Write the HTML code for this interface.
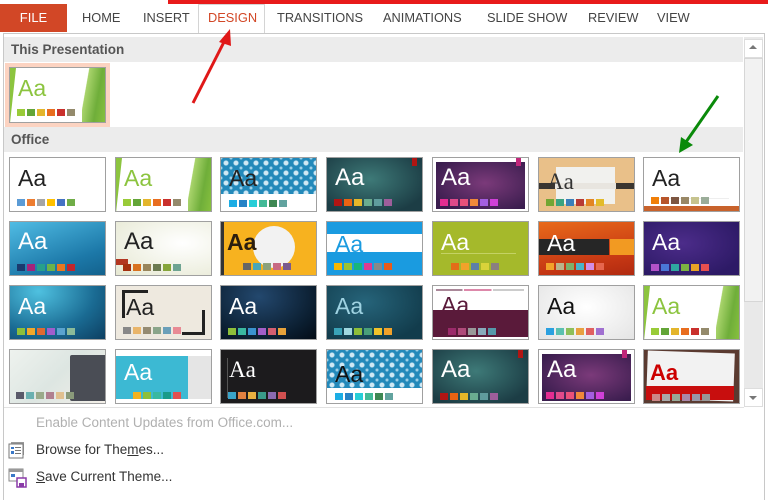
<!DOCTYPE html>
<html><head><meta charset="utf-8"><style>
*{margin:0;padding:0;box-sizing:border-box}
body{width:768px;height:500px;overflow:hidden;background:#fff;font-family:"Liberation Sans",sans-serif;position:relative}
.abs{position:absolute}
.tab{position:absolute;top:4px;height:28px;line-height:28px;font-size:12.8px;color:#444;}
.t{position:absolute;width:97px;height:55px;border:1px solid #a0a0a0;overflow:hidden}
.a{position:absolute;left:8px;top:8px;font-size:23px;line-height:24px;color:#222}
.s{position:absolute;left:7px;top:41px;display:flex;gap:2px}
.s i{display:block;width:8px;height:7px}
.hdr{position:absolute;left:4px;width:739px;height:25px;background:#ececec;font-size:13.5px;font-weight:bold;color:#555;line-height:26px;padding-left:7px}
.m{position:absolute;left:36px;font-size:13.5px;color:#333}
</style></head><body>
<!-- top -->
<div class="abs" style="left:168px;top:0;width:600px;height:4px;background:#e81a1a"></div>
<div class="abs" style="left:0;top:4px;width:67px;height:28px;background:#d24726;color:#fff;font-size:13px;line-height:28px;text-align:center">FILE</div>
<div class="tab" style="left:82px">HOME</div>
<div class="tab" style="left:143px">INSERT</div>
<div class="abs" style="left:198px;top:4px;width:67px;height:30px;background:#fff;border:1px solid #d4d4d4;border-bottom:none"></div>
<div class="tab" style="left:208px;color:#d24726">DESIGN</div>
<div class="tab" style="left:277px">TRANSITIONS</div>
<div class="tab" style="left:383px">ANIMATIONS</div>
<div class="tab" style="left:487px">SLIDE SHOW</div>
<div class="tab" style="left:588px">REVIEW</div>
<div class="tab" style="left:657px">VIEW</div>
<!-- panel -->
<div class="abs" style="left:3px;top:33px;width:762px;height:467px;border:1px solid #c8c8c8;border-bottom:none;background:#fff"></div>
<div class="hdr" style="top:37px">This Presentation</div>
<div class="hdr" style="top:127px">Office</div>
<div class="abs" style="left:5px;top:63px;width:105px;height:64px;background:#fcd3c1"></div>
<!-- scrollbar -->
<div class="abs" style="left:744px;top:37px;width:19px;height:370px;background:#e9e9e9"></div>
<div class="abs" style="left:744px;top:39px;width:19px;height:19px;background:#fff;border:1px solid #ddd"></div>
<div class="abs" style="left:749px;top:45px;width:0;height:0;border-left:4px solid transparent;border-right:4px solid transparent;border-bottom:4px solid #777"></div>
<div class="abs" style="left:744px;top:58px;width:19px;height:244px;background:#f2f2f2;border:1px solid #d6d6d6"></div>
<div class="abs" style="left:744px;top:388px;width:19px;height:19px;background:#fff;border:1px solid #ddd"></div>
<div class="abs" style="left:749px;top:396px;width:0;height:0;border-left:4px solid transparent;border-right:4px solid transparent;border-top:4px solid #777"></div>
<div class="abs" style="left:4px;top:407px;width:740px;height:1px;background:#e2e2e2"></div>

<!-- this presentation -->
<div class="t" style="left:9px;top:67px;width:97px;height:56px;background:#fff">
<div class="abs" style="left:0;top:0;width:0;height:0;border-top:55px solid #8cc43f;border-right:6px solid transparent"></div>
<div class="abs" style="left:72px;top:0;width:25px;height:56px;background:linear-gradient(100deg,#fff 0,#fff 20%,#a9d46c 22%,#6fae3a 60%,#8cc43f 100%)"></div>
<div class="a" style="color:#8cc43f">Aa</div>
<div class="s"><i style="background:#99cb38"></i><i style="background:#63a537"></i><i style="background:#e3b52c"></i><i style="background:#e86d1f"></i><i style="background:#c9302c"></i><i style="background:#948a6c"></i></div></div>

<!-- row 1 -->
<div class="t" style="left:9px;top:157px;background:#fff"><div class="a">Aa</div>
<div class="s"><i style="background:#5b9bd5"></i><i style="background:#ed7d31"></i><i style="background:#a5a5a5"></i><i style="background:#ffc000"></i><i style="background:#4472c4"></i><i style="background:#70ad47"></i></div></div>
<div class="t" style="left:115px;top:157px;background:#fff">
<div class="abs" style="left:0;top:0;border-top:55px solid #8cc43f;border-right:6px solid transparent"></div>
<div class="abs" style="left:72px;top:0;width:25px;height:55px;background:linear-gradient(100deg,#fff 0,#fff 20%,#a9d46c 22%,#6fae3a 60%,#8cc43f 100%)"></div>
<div class="a" style="color:#8cc43f">Aa</div>
<div class="s"><i style="background:#99cb38"></i><i style="background:#63a537"></i><i style="background:#e3b52c"></i><i style="background:#e86d1f"></i><i style="background:#c9302c"></i><i style="background:#948a6c"></i></div></div>
<div class="t" style="left:220px;top:157px;background:#fff">
<div class="abs" style="left:0;top:0;width:97px;height:36px;background:radial-gradient(circle at 50% 50%,#cfe8f4 0 2px,transparent 3px) 0 0/10px 10px,radial-gradient(circle,#9fd0e8 0 1px,transparent 2px) 5px 5px/10px 10px,#2389ba"></div>
<div class="a">Aa</div>
<div class="s" style="left:8px;top:42px"><i style="background:#1cade4"></i><i style="background:#2683c6"></i><i style="background:#27ced7"></i><i style="background:#42ba97"></i><i style="background:#3e8853"></i><i style="background:#62a39f"></i></div></div>
<div class="t" style="left:326px;top:157px;background:radial-gradient(ellipse at 45% 40%,#3e7a78,#1c3d45 80%)">
<div class="abs" style="left:85px;top:0;width:5px;height:8px;background:#b01513"></div>
<div class="a" style="color:#fff;font-size:24px">Aa</div>
<div class="s"><i style="background:#b01513"></i><i style="background:#ea6312"></i><i style="background:#e6b729"></i><i style="background:#6aac90"></i><i style="background:#5f9c9d"></i><i style="background:#9e5e9b"></i></div></div>
<div class="t" style="left:432px;top:157px;background:#fff">
<div class="abs" style="left:3px;top:4px;width:89px;height:47px;background:radial-gradient(ellipse at 55% 45%,#7b3a7a,#3a1d4e 85%)"></div>
<div class="abs" style="left:83px;top:0;width:5px;height:8px;background:#c0267a"></div>
<div class="a" style="color:#fff;font-size:24px">Aa</div>
<div class="s"><i style="background:#e32d91"></i><i style="background:#e04a8a"></i><i style="background:#e9507a"></i><i style="background:#f0883a"></i><i style="background:#a45ee0"></i><i style="background:#d040d8"></i></div></div>
<div class="t" style="left:538px;top:157px;background:#e9c089">
<div class="abs" style="left:17px;top:9px;width:59px;height:37px;background:#f1f1ee"></div>
<div class="abs" style="left:0;top:25px;width:97px;height:6px;background:#3a3530"></div>
<div class="abs" style="left:16px;top:25px;width:61px;height:6px;background:#e8e5df"></div>
<div class="a" style="color:#333;font-family:'Liberation Serif',serif;top:12px">Aa</div>
<div class="s"><i style="background:#72a633"></i><i style="background:#3aa37f"></i><i style="background:#3a7fb9"></i><i style="background:#b83a33"></i><i style="background:#e38521"></i><i style="background:#e3bb2a"></i></div></div>
<div class="t" style="left:643px;top:157px;background:#fff">
<div class="abs" style="left:0;top:48px;width:97px;height:7px;background:#c8622b"></div>
<div class="abs" style="left:10px;top:40px;width:75px;height:1px;background:#eee"></div>
<div class="a" style="color:#222">Aa</div>
<div class="s" style="top:39px"><i style="background:#f07f09"></i><i style="background:#b8552a"></i><i style="background:#7d5641"></i><i style="background:#998866"></i><i style="background:#c6c38e"></i><i style="background:#9bad99"></i></div></div>

<!-- row 2 -->
<div class="t" style="left:9px;top:221px;background:linear-gradient(160deg,#50bce4,#1c78a8 70%,#13628d)"><div class="a" style="color:#fff;font-size:24px">Aa</div>
<div class="s" style="top:42px"><i style="background:#1b3a6e"></i><i style="background:#a3247a"></i><i style="background:#28a08a"></i><i style="background:#6bb24a"></i><i style="background:#e9771e"></i><i style="background:#c2262c"></i></div></div>
<div class="t" style="left:115px;top:221px;background:radial-gradient(ellipse at 70% 40%,#fff,#e6e8d2)">
<div class="abs" style="left:0;top:37px;width:12px;height:6px;background:#b23620"></div>
<div class="a" style="color:#222;font-size:24px">Aa</div>
<div class="s" style="left:7px;top:42px"><i style="background:#a4300f"></i><i style="background:#d8721f"></i><i style="background:#99855a"></i><i style="background:#6b7a50"></i><i style="background:#86a53b"></i><i style="background:#6ea492"></i></div></div>
<div class="t" style="left:220px;top:221px;background:#f7b21f">
<div class="abs" style="left:0;top:0;width:3px;height:55px;background:#333"></div>
<div class="abs" style="left:32px;top:4px;width:42px;height:42px;border-radius:50%;background:#f2f2f2"></div>
<div class="a" style="color:#2b1d0e;font-weight:bold;left:6px">Aa</div>
<div class="s" style="left:22px"><i style="background:#666"></i><i style="background:#4aa6b9"></i><i style="background:#8ca27c"></i><i style="background:#c86a83"></i><i style="background:#7a5b8e"></i></div></div>
<div class="t" style="left:326px;top:221px;background:#1a9be0">
<div class="abs" style="left:0;top:12px;width:97px;height:18px;background:#fff"></div>
<div class="a" style="color:#1a9be0;top:10px">Aa</div>
<div class="s"><i style="background:#f6b700"></i><i style="background:#9ac232"></i><i style="background:#19b57b"></i><i style="background:#de3b8f"></i><i style="background:#888"></i><i style="background:#e85b1a"></i></div></div>
<div class="t" style="left:432px;top:221px;background:#a5b92b">
<div class="abs" style="left:8px;top:31px;width:75px;height:1px;background:#c4d264"></div>
<div class="a" style="color:#fff">Aa</div>
<div class="s" style="left:18px"><i style="background:#e36d18"></i><i style="background:#f2a22a"></i><i style="background:#5d7fa8"></i><i style="background:#d9d33a"></i><i style="background:#8a7f82"></i></div></div>
<div class="t" style="left:538px;top:221px;background:linear-gradient(170deg,#e86a1a,#c73814 70%,#b02a10)">
<div class="abs" style="left:0;top:17px;width:70px;height:16px;background:#262626"></div>
<div class="abs" style="left:71px;top:17px;width:26px;height:16px;background:#f29a22"></div>
<div class="a" style="color:#fff;top:9px">Aa</div>
<div class="s"><i style="background:#f2a22a"></i><i style="background:#b9b48a"></i><i style="background:#7fb06b"></i><i style="background:#4cb4c8"></i><i style="background:#d28ee6"></i><i style="background:#e6664e"></i></div></div>
<div class="t" style="left:643px;top:221px;background:radial-gradient(ellipse at 40% 40%,#4c2c8a,#2d1a66 80%)"><div class="a" style="color:#fff">Aa</div>
<div class="s" style="top:42px"><i style="background:#b352c8"></i><i style="background:#4a77d6"></i><i style="background:#2fa7a0"></i><i style="background:#7cb342"></i><i style="background:#e8a326"></i><i style="background:#e64f4f"></i></div></div>

<!-- row 3 -->
<div class="t" style="left:9px;top:285px;background:radial-gradient(ellipse at 30% 10%,#4fc1e0,#1a6b93 60%,#0d3f61)"><div class="a" style="color:#fff">Aa</div>
<div class="s" style="top:42px"><i style="background:#8ebf3a"></i><i style="background:#f2a82a"></i><i style="background:#e06a30"></i><i style="background:#a05ecc"></i><i style="background:#5aa3cf"></i><i style="background:#8bbb99"></i></div></div>
<div class="t" style="left:115px;top:285px;background:#eee9df">
<div class="abs" style="left:6px;top:4px;width:26px;height:3px;background:#222"></div>
<div class="abs" style="left:6px;top:4px;width:3px;height:28px;background:#222"></div>
<div class="abs" style="left:86px;top:24px;width:3px;height:25px;background:#222"></div>
<div class="abs" style="left:66px;top:46px;width:23px;height:3px;background:#222"></div>
<div class="a" style="color:#222;left:10px;top:9px">Aa</div>
<div class="s"><i style="background:#888"></i><i style="background:#e9b56a"></i><i style="background:#958b72"></i><i style="background:#8aa58a"></i><i style="background:#6a9fb9"></i><i style="background:#e88a94"></i></div></div>
<div class="t" style="left:220px;top:285px;background:radial-gradient(ellipse at 40% 20%,#23486e,#0b1e30 70%,#040c16)"><div class="a" style="color:#fff">Aa</div>
<div class="s" style="top:42px"><i style="background:#8ebf3a"></i><i style="background:#3ab8a0"></i><i style="background:#3a93cf"></i><i style="background:#a35ec8"></i><i style="background:#d35e70"></i><i style="background:#e8a23a"></i></div></div>
<div class="t" style="left:326px;top:285px;background:radial-gradient(ellipse at 40% 30%,#26647a,#123c4c 80%)"><div class="a" style="color:#9fd3e2">Aa</div>
<div class="s" style="top:42px"><i style="background:#3aa3b8"></i><i style="background:#a0d8e0"></i><i style="background:#8ebf3a"></i><i style="background:#4aa07a"></i><i style="background:#f2c32a"></i><i style="background:#f2a22a"></i></div></div>
<div class="t" style="left:432px;top:285px;background:#fff">
<div class="abs" style="left:3px;top:3px;width:88px;height:2px;background:linear-gradient(90deg,#a89 30%,#fff 30% 32%,#d8a 32% 63%,#fff 63% 65%,#ccc 65%)"></div>
<div class="abs" style="left:0;top:24px;width:97px;height:27px;background:#5a1a3a"></div>
<div class="a" style="color:#5a1a3a;top:7px">Aa</div>
<div class="s" style="left:15px;top:42px"><i style="background:#9b2a6a"></i><i style="background:#b04a7a"></i><i style="background:#999"></i><i style="background:#8ab"></i><i style="background:#59a"></i></div></div>
<div class="t" style="left:538px;top:285px;background:radial-gradient(ellipse at 50% 40%,#fff,#e4e4e4)"><div class="a" style="color:#111">Aa</div>
<div class="s" style="top:42px"><i style="background:#2aa0e0"></i><i style="background:#5ac0b0"></i><i style="background:#8ebf5a"></i><i style="background:#e8a040"></i><i style="background:#e06060"></i><i style="background:#a070d0"></i></div></div>
<div class="t" style="left:643px;top:285px;background:#fff">
<div class="abs" style="left:0;top:0;border-top:55px solid #8cc43f;border-right:6px solid transparent"></div>
<div class="abs" style="left:72px;top:0;width:25px;height:55px;background:linear-gradient(100deg,#fff 0,#fff 20%,#a9d46c 22%,#6fae3a 60%,#8cc43f 100%)"></div>
<div class="a" style="color:#8cc43f">Aa</div>
<div class="s" style="top:42px"><i style="background:#99cb38"></i><i style="background:#63a537"></i><i style="background:#e3b52c"></i><i style="background:#e86d1f"></i><i style="background:#c9302c"></i><i style="background:#948a6c"></i></div></div>

<!-- row 4 -->
<div class="t" style="left:9px;top:349px;background:linear-gradient(135deg,#eef2ee,#dde6e2 50%,#f3efe8)">
<div class="abs" style="left:60px;top:5px;width:37px;height:46px;background:#4a4d55;border-radius:2px"></div>
<div class="s" style="left:6px;top:42px"><i style="background:#5a5a6a"></i><i style="background:#6ab0b0"></i><i style="background:#9aaa8a"></i><i style="background:#b08090"></i><i style="background:#e0c090"></i><i style="background:#8a9a7a"></i></div></div>
<div class="t" style="left:115px;top:349px;background:#fff">
<div class="abs" style="left:0;top:6px;width:72px;height:43px;background:#3cb9d3"></div>
<div class="abs" style="left:72px;top:6px;width:25px;height:43px;background:#e5e5e5"></div>
<div class="a" style="color:#fff;top:10px">Aa</div>
<div class="s" style="left:17px;top:42px"><i style="background:#f2b21f"></i><i style="background:#8ebf3a"></i><i style="background:#3ab8a0"></i><i style="background:#1a9b8a"></i><i style="background:#e05050"></i></div></div>
<div class="t" style="left:220px;top:349px;background:#1c1b1d">
<div class="abs" style="left:6px;top:8px;width:1px;height:40px;background:#555"></div>
<div class="a" style="color:#fff;font-family:'Liberation Serif',serif">Aa</div>
<div class="s" style="top:42px"><i style="background:#3aa3c8"></i><i style="background:#e08040"></i><i style="background:#e8b040"></i><i style="background:#3a9a8a"></i><i style="background:#8a6ab0"></i><i style="background:#d05050"></i></div></div>
<div class="t" style="left:326px;top:349px;background:#fff">
<div class="abs" style="left:0;top:0;width:97px;height:38px;background:radial-gradient(circle at 50% 50%,#cfe8f4 0 2px,transparent 3px) 0 0/10px 10px,radial-gradient(circle,#9fd0e8 0 1px,transparent 2px) 5px 5px/10px 10px,#2389ba"></div>
<div class="a" style="color:#111;top:12px">Aa</div>
<div class="s" style="left:8px;top:43px"><i style="background:#1cade4"></i><i style="background:#2683c6"></i><i style="background:#27ced7"></i><i style="background:#42ba97"></i><i style="background:#3e8853"></i><i style="background:#62a39f"></i></div></div>
<div class="t" style="left:432px;top:349px;background:radial-gradient(ellipse at 45% 40%,#3e7a78,#1c3d45 80%)">
<div class="abs" style="left:85px;top:0;width:5px;height:8px;background:#b01513"></div>
<div class="a" style="color:#fff;font-size:24px">Aa</div>
<div class="s" style="top:43px"><i style="background:#b01513"></i><i style="background:#ea6312"></i><i style="background:#e6b729"></i><i style="background:#6aac90"></i><i style="background:#5f9c9d"></i><i style="background:#9e5e9b"></i></div></div>
<div class="t" style="left:538px;top:349px;background:#fff">
<div class="abs" style="left:3px;top:4px;width:89px;height:47px;background:radial-gradient(ellipse at 55% 45%,#7b3a7a,#3a1d4e 85%)"></div>
<div class="abs" style="left:83px;top:0;width:5px;height:8px;background:#c0267a"></div>
<div class="a" style="color:#fff;font-size:24px">Aa</div>
<div class="s" style="top:42px"><i style="background:#e32d91"></i><i style="background:#e04a8a"></i><i style="background:#e9507a"></i><i style="background:#f0883a"></i><i style="background:#a45ee0"></i><i style="background:#d040d8"></i></div></div>
<div class="t" style="left:643px;top:349px;background:#5a3a30">
<div class="abs" style="left:3px;top:2px;width:87px;height:48px;background:#f2f2f2;transform:rotate(2deg)"></div>
<div class="abs" style="left:2px;top:36px;width:88px;height:14px;background:#c80e0e"></div>
<div class="a" style="color:#c00;font-weight:bold;font-size:22px;left:6px;top:11px">Aa</div>
<div class="s" style="left:8px;top:44px"><i style="background:#c88"></i><i style="background:#aaa"></i><i style="background:#9a9"></i><i style="background:#a8a"></i><i style="background:#99a"></i><i style="background:#999"></i></div></div>

<!-- menu -->
<div class="m" style="top:415px;color:#b0b0b0">Enable Content Updates from Office.com...</div>
<div class="m" style="top:442px">Browse for The<u>m</u>es...</div>
<div class="m" style="top:469px"><u>S</u>ave Current Theme...</div>
<svg class="abs" style="left:8px;top:441px" width="18" height="18" viewBox="0 0 18 18">
<rect x="3" y="1" width="13" height="13" fill="#9a9a9a"/><rect x="1" y="3" width="14" height="14" fill="#fff" stroke="#777"/><rect x="3" y="6" width="3" height="2" fill="#3a78c8"/><rect x="3" y="10" width="3" height="3" fill="#3a78c8"/><rect x="7" y="6" width="6" height="1" fill="#777"/><rect x="7" y="9" width="6" height="1" fill="#777"/><rect x="7" y="12" width="6" height="1" fill="#777"/></svg>
<svg class="abs" style="left:8px;top:468px" width="20" height="20" viewBox="0 0 20 20">
<rect x="1" y="1" width="14" height="12" fill="#fff" stroke="#888"/><rect x="1" y="1" width="14" height="3" fill="#999"/><rect x="3" y="6" width="4" height="3" fill="#3a78c8"/><rect x="9" y="10" width="9" height="9" fill="#fff" stroke="#8a3aa8" stroke-width="1.5"/><rect x="11" y="15" width="5" height="4" fill="#8a3aa8"/></svg>

<!-- arrows -->
<svg class="abs" style="left:0;top:0" width="768" height="500">
<line x1="193" y1="103" x2="225" y2="40" stroke="#e01818" stroke-width="3"/>
<polygon points="230,29 219,42 231,46" fill="#e01818"/>
<line x1="718" y1="96" x2="686" y2="142" stroke="#0a8a0a" stroke-width="3"/>
<polygon points="679,153 681,137 693,145" fill="#0a8a0a"/>
</svg>
</body></html>
